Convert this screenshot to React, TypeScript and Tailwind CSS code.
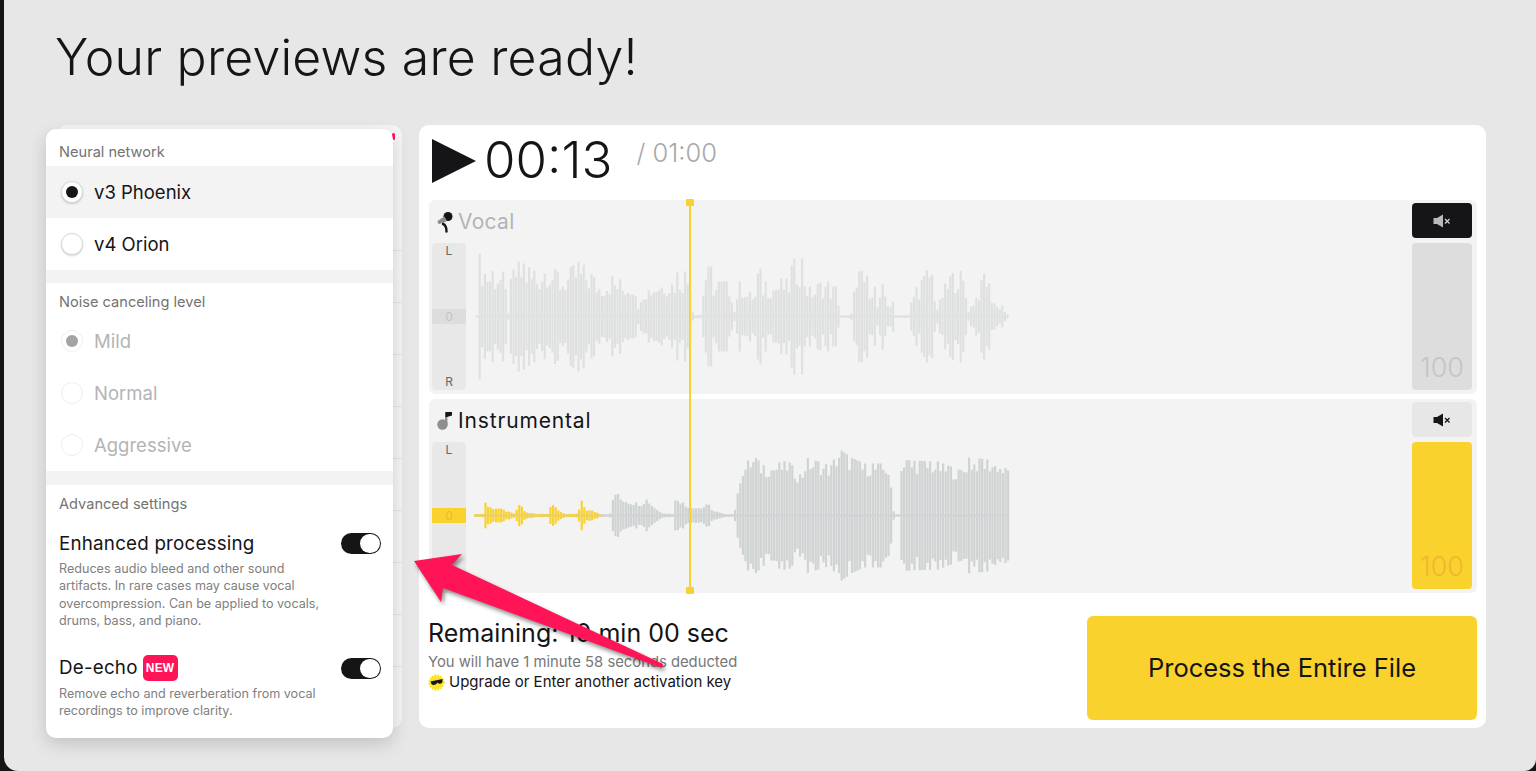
import React from "react";

type Pt = [number, number];

const vocalEnv: Pt[] = [
  [476, 1], [477, 66], [480, 60], [487, 50], [492, 45], [497, 50], [502, 45], [505, 25], [507, 3], [510, 40], [515, 55], [520, 55], [527, 50],
  [535, 45], [540, 50], [545, 60], [552, 50], [560, 40], [570, 50], [578, 55], [585, 50], [592, 40], [600, 35], [607, 40], [615, 40], [622, 35],
  [635, 38], [637, 6], [640, 30], [653, 35], [657, 38], [673, 40], [677, 45], [690, 45], [692, 2], [701, 2], [703, 50], [710, 50], [713, 35], [730, 35],
  [733, 3], [737, 35], [743, 35], [747, 25], [755, 25], [758, 55], [762, 35], [773, 35], [780, 38], [788, 38], [792, 58], [801, 58], [807, 30], [813, 30],
  [825, 38], [830, 30], [837, 30], [838, 1], [850, 1], [852, 25], [855, 25], [858, 45], [864, 47], [868, 35], [873, 35], [877, 8], [882, 35], [887, 15],
  [893, 15], [894, 1], [908, 1], [912, 25], [922, 38], [929, 53], [933, 30], [937, 5], [940, 25], [945, 35], [953, 45], [958, 52], [965, 25], [968, 3],
  [973, 20], [978, 30], [985, 48], [990, 25], [997, 10], [1001, 15], [1005, 3], [1008, 1],
];

const instEnv: Pt[] = [
  [474, 1], [483, 2], [484, 16], [488, 8], [497, 8], [510, 3], [515, 2], [517, 14], [525, 3], [535, 2], [547, 2], [550, 12], [560, 4], [565, 1.5],
  [577, 2], [580, 16], [585, 6], [595, 4], [598, 2], [609, 1], [611, 12], [613, 26], [620, 18], [630, 14], [640, 12], [646, 18], [650, 12], [660, 3],
  [672, 1.5], [675, 20], [685, 10], [700, 8], [707, 12], [712, 5], [725, 1], [732, 1], [735, 10], [740, 48], [752, 60], [763, 50], [787, 55], [800, 40],
  [805, 58], [830, 50], [838, 67], [850, 58], [863, 52], [887, 52], [891, 20], [893, 1], [898, 1], [899, 56], [910, 55], [937, 54], [960, 45], [967, 58],
  [997, 55], [1007, 45], [1008, 0],
];

function envAt(env: Pt[], x: number) {
  for (let i = 1; i < env.length; i++) {
    if (x <= env[i][0]) {
      const [x0, a0] = env[i - 1];
      const [x1, a1] = env[i];
      return a0 + ((a1 - a0) * (x - x0)) / (x1 - x0);
    }
  }
  return 0;
}

function noise(i: number) {
  const v = Math.sin(i * 12.9898) * 43758.5453;
  return v - Math.floor(v);
}

const Wave = ({ env, color, low, barWidth, highlight }: { env: Pt[]; color: string; low: number; barWidth: number; highlight?: boolean }) => {
  const bars = [];
  let i = 0;
  for (let x = env[0][0]; x < 1008; x += 2.6) {
    const n = noise(i);
    const a = Math.max(1, envAt(env, x) * (n > 0.6 ? 1 : low + (1 - low) * n));
    bars.push(
      <rect key={i} x={x - 470} y={73.5 - a} width={barWidth} height={a * 2} fill={highlight && x < 599 ? "#f9d22e" : color} />
    );
    i++;
  }
  return (
    <svg width="540" height="147" viewBox="0 0 540 147" className="ml-[4px] block">
      {bars}
      <rect x={env[0][0] - 470} y={72.5} width={1008 - env[0][0]} height={2} fill={color} />
      {highlight && <rect x={4} y={72.5} width={125} height={2} fill="#f9d22e" />}
    </svg>
  );
};

const MicIcon = () => (
  <svg width="16" height="22" viewBox="0 0 16 22">
    <circle cx="11" cy="5.5" r="4.5" fill="#151417" />
    <path d="M2.5 8.5 L7.5 5.5 L10 10 L5 12.5 Z" fill="#8d8d8d" />
    <circle cx="2.5" cy="11" r="2" fill="#8d8d8d" />
    <path d="M6 13 C9 14 9.5 17 9.5 20.5" stroke="#151417" strokeWidth="2.4" fill="none" strokeLinecap="round" />
  </svg>
);

const NoteIcon = () => (
  <svg width="16" height="20" viewBox="0 0 16 20">
    <circle cx="5.5" cy="13.5" r="5.2" fill="#8f8f8f" />
    <rect x="8" y="1.5" width="2.4" height="12" fill="#8f8f8f" />
    <path d="M8.5 1 H15 V4.5 L10 6 H8.5 Z" fill="#151417" />
  </svg>
);

const MuteIcon = ({ body, cross }: { body: string; cross: string }) => (
  <svg width="18" height="14" viewBox="0 0 18 14">
    <path d="M0.5 4 H4 L10 0.5 V13.5 L4 10 H0.5 Z" fill={body} />
    <path d="M12 5 L16.5 9.5 M16.5 5 L12 9.5" stroke={cross} strokeWidth="1.3" />
  </svg>
);

const ShadesIcon = () => (
  <svg width="17" height="17" viewBox="0 0 17 17" className="shrink-0">
    <circle cx="8.5" cy="8.5" r="7" fill="#fbe32f" stroke="#fbe32f" strokeWidth="2.4" strokeDasharray="1.6 1.2" />
    <path d="M2.5 7.5 L14.5 5 L14.5 7.5 C14 10 11 10.5 9.5 8.5 C8.5 10.5 5 12 3.5 10 Z" fill="#151417" />
  </svg>
);

const Radio = ({ state }: { state: "on" | "off" | "dim" | "dimOff" }) => (
  <span
    className={`flex h-[22px] w-[22px] shrink-0 items-center justify-center rounded-full bg-white ${
      state === "on" || state === "off"
        ? "border border-[#d8d8d8] shadow-[0_1px_2px_rgba(0,0,0,0.18)]"
        : "border border-[#eeeeee]"
    }`}
  >
    {state === "on" && <span className="h-[12px] w-[12px] rounded-full bg-[#151417]" />}
    {state === "dim" && <span className="h-[12px] w-[12px] rounded-full bg-[#a3a3a3]" />}
  </span>
);

const Option = ({ label, state, active }: { label: string; state: "on" | "off" | "dim" | "dimOff"; active?: boolean }) => (
  <div className={`flex h-[52px] items-center gap-[11px] pl-[15px] ${active ? "bg-[#f3f3f3]" : "bg-white"}`}>
    <Radio state={state} />
    <span className={`pt-[2px] text-[18.5px] ${state === "on" || state === "off" ? "text-[#151417]" : "text-[#b4b4b4]"}`}>{label}</span>
  </div>
);

const Toggle = () => (
  <span className="flex h-[21px] w-[40px] shrink-0 items-center justify-end rounded-full bg-[#151417] pr-[1px]">
    <span className="h-[19px] w-[20px] rounded-full bg-white" />
  </span>
);

const Track = ({
  icon,
  label,
  dim,
  highlight,
  env,
  waveColor,
  low,
  barWidth,
}: {
  icon: React.ReactNode;
  label: string;
  dim?: boolean;
  highlight?: boolean;
  env: Pt[];
  waveColor: string;
  low: number;
  barWidth: number;
}) => (
  <div className="flex h-[194px] rounded-[6px] bg-[#f3f3f3] pl-[3px] pr-[5px] pt-[3px]">
    <div className="flex-1">
      <div className="mb-[2px] flex h-[38px] items-center gap-[5px] pl-[4px]">
        <span className="flex w-[17px] justify-center">{icon}</span>
        <span className={`text-[21px] ${dim ? "tracking-[0.3px] text-[#b4b4b4]" : "tracking-[0.85px] text-[#151417]"}`}>{label}</span>
      </div>
      <div className="flex">
        <div className="relative flex h-[147px] w-[34px] flex-col items-center justify-between rounded-[4px] bg-[#e8e8e8] text-[12px] leading-[16px] text-[#666666]">
          <span>L</span>
          <span
            className={`absolute left-0 top-[66px] flex h-[15px] w-full items-center justify-center ${
              highlight ? "bg-[#f9d22e] text-[#f2b632]" : "bg-[#dcdddc] text-[#c4c4c4]"
            }`}
          >
            0
          </span>
          <span>R</span>
        </div>
        <Wave env={env} color={waveColor} low={low} barWidth={barWidth} highlight={highlight} />
      </div>
    </div>
    <div className="flex w-[60px] flex-col gap-[5px]">
      <div
        className={`flex h-[35px] items-center justify-center rounded-[4px] ${dim ? "bg-[#151417]" : "bg-[#e7e7e7]"}`}
      >
        {dim ? <MuteIcon body="#b9b9b9" cross="#d0d0d0" /> : <MuteIcon body="#151417" cross="#151417" />}
      </div>
      <div
        className={`flex h-[147px] items-end justify-center rounded-[4px] pb-[6px] text-[27px] font-light leading-[32px] ${
          dim ? "bg-[#dcdddc] text-[#c4c6c6]" : "bg-[#f9d22e] text-[#f2b632]"
        }`}
      >
        100
      </div>
    </div>
  </div>
);

const Panel = () => (
  <div className="absolute left-[-11px] top-[4px] h-[609px] w-[347px] overflow-hidden rounded-[10px] bg-white shadow-[0_6px_18px_rgba(0,0,0,0.16)]">
    <div className="flex h-[37px] items-center pl-[13px] pt-[11px] text-[14.6px] text-[#737373]">Neural network</div>
    <Option label="v3 Phoenix" state="on" active />
    <Option label="v4 Orion" state="off" />
    <div className="h-[13px] bg-[#f3f3f3]" />
    <div className="flex h-[32px] items-center pl-[13px] pt-[7px] text-[14.6px] text-[#737373]">Noise canceling level</div>
    <Option label="Mild" state="dim" />
    <Option label="Normal" state="dimOff" />
    <Option label="Aggressive" state="dimOff" />
    <div className="h-[14px] bg-[#f3f3f3]" />
    <div className="flex h-[34px] items-center pl-[13px] pt-[5px] text-[14.6px] text-[#737373]">Advanced settings</div>
    <div className="mt-[5px] flex h-[39px] items-center justify-between pl-[13px] pr-[12px]">
      <span className="pt-[2px] text-[18.8px] tracking-[0.2px] text-[#151417]">Enhanced processing</span>
      <Toggle />
    </div>
    <p className="mt-[-3px] pl-[13px] text-[12.6px] leading-[17.3px] text-[#808080]">
      Reduces audio bleed and other sound
      <br />
      artifacts. In rare cases may cause vocal
      <br />
      overcompression. Can be applied to vocals,
      <br />
      drums, bass, and piano.
    </p>
    <div className="mt-[20px] flex h-[38px] items-center justify-between pl-[13px] pr-[12px]">
      <span className="flex items-center gap-[5px] text-[18.8px] tracking-[0.2px] text-[#151417]">
        De-echo
        <span className="flex h-[26px] w-[35px] items-center justify-center rounded-[5px] bg-[#ff1458] font-['Liberation_Sans',sans-serif] text-[12px] font-bold text-white">
          NEW
        </span>
      </span>
      <Toggle />
    </div>
    <p className="mt-[-2px] pl-[13px] text-[12.6px] leading-[17.3px] text-[#808080]">
      Remove echo and reverberation from vocal
      <br />
      recordings to improve clarity.
    </p>
  </div>
);

const Arrow = () => (
  <svg
    width="280"
    height="130"
    viewBox="0 0 280 130"
    className="absolute left-[400px] top-[550px] drop-shadow-[2px_3px_2px_rgba(0,0,0,0.45)]"
  >
    <path d="M14 11 L62 4 L52 15 L263 114 L262 118 L43 38 L41 52 Z" fill="#ff1458" />
  </svg>
);

export default function App() {
  return (
    <div className="relative h-[771px] w-[1536px] overflow-hidden bg-[#151417] pl-[4px] font-['Inter',sans-serif]">
      <div className="h-[771px] rounded-bl-[14px] rounded-br-[12px] bg-[#e7e7e7] pl-[51px]">
        <h1 className="h-[125px] pt-[26px] text-[50px] font-light leading-[62px] tracking-[0.2px] text-[#151417]">
          Your previews are ready!
        </h1>
        <div className="flex h-[603px] gap-[17px] pl-[2px]">
          {/* settings list sits behind the popup */}
          <div className="relative w-[345px]">
            <div className="flex h-full flex-col overflow-hidden rounded-[10px] bg-[#f5f5f5] pt-[125px]">
              {[0, 1, 2, 3, 4, 5, 6, 7, 8].map((i) => (
                <div key={i} className="h-[52px] shrink-0 border-t border-[#e4e4e4]" />
              ))}
            </div>
            <span className="absolute right-[7px] top-[8px] h-[7px] w-[3px] rounded-full bg-[#ff1458]" />
            <Panel />
          </div>

          <div className="relative h-[603px] w-[1067px] rounded-[10px] bg-white pl-[10px] pr-[9px]">
            <div className="flex h-[75px] items-start">
              <svg width="44" height="44" viewBox="0 0 44 44" className="mt-[14px] ml-[3px]">
                <path d="M0 0 L44 22 L0 44 Z" fill="#151417" />
              </svg>
              <span className="ml-[8px] mt-[5px] text-[51px] font-light leading-[60px] text-[#151417]">00:13</span>
              <span className="ml-[24px] mt-[11px] text-[25.5px] font-light leading-[34px] text-[#a8a8a8]">/ 01:00</span>
            </div>
            <div className="flex flex-col gap-[5px]">
              <Track icon={<MicIcon />} label="Vocal" dim env={vocalEnv} waveColor="#dfe1e0" low={0.5} barWidth={2.2} />
              <Track icon={<NoteIcon />} label="Instrumental" highlight env={instEnv} waveColor="#d0d3d3" low={0.75} barWidth={2.2} />
            </div>
            <div className="mt-[23px] flex items-start justify-between">
              <div className="ml-[-1px]">
                <div className="text-[25px] leading-[34px] text-[#151417]">Remaining: 10 min 00 sec</div>
                <div className="mt-[2px] text-[14.8px] leading-[20px] text-[#777777]">You will have 1 minute 58 seconds deducted</div>
                <div className="flex items-center gap-[4px] text-[15px] leading-[20px] text-[#151417]">
                  <ShadesIcon /> Upgrade or Enter another activation key
                </div>
              </div>
              <button className="h-[104px] w-[390px] rounded-[6px] bg-[#f9d22e] text-[25.5px] text-[#151417]">
                Process the Entire File
              </button>
            </div>
            {/* playhead */}
            <div className="absolute left-[270px] top-[76px] h-[389px] w-[2px] bg-[#f9d22e]" />
            <div className="absolute left-[267px] top-[74px] h-[7px] w-[8px] rounded-[1px] bg-[#f9d22e]" />
            <div className="absolute left-[267px] top-[462px] h-[7px] w-[8px] rounded-[1px] bg-[#f9d22e]" />
          </div>
        </div>
      </div>
      <Arrow />
    </div>
  );
}
